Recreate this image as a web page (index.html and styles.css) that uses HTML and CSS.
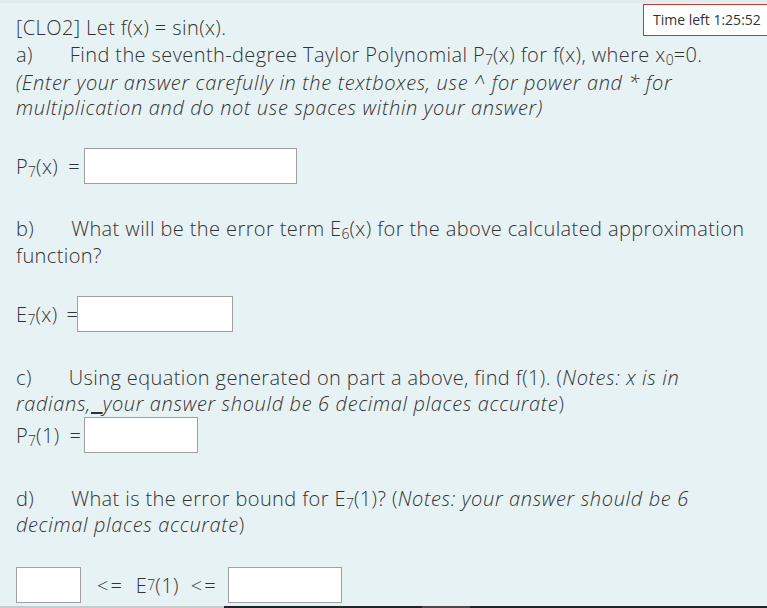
FILE: index.html
```html
<!DOCTYPE html>
<html>
<head>
<meta charset="utf-8">
<link rel="stylesheet" href="styles.css">
</head>
<body>
<div class="timer">Time left 1:25:52</div>
<main class="quiz">
  <p class="intro">[CLO2] Let f(x) = sin(x).<br><span class="lbl">a)</span>Find the seventh-degree Taylor Polynomial P<sub>7</sub>(x) for f(x), where x<sub>0</sub>=0.</p>
  <p class="note"><em>(Enter your answer carefully in the textboxes, use ^ for power and * for multiplication and do not use spaces within your answer)</em></p>
  <div class="row row-p7x"><span class="eq">P<sub>7</sub>(x)<span class="eqs">=</span></span><input class="box box-wide" type="text"></div>
  <p class="part part-b"><span class="lbl">b)</span>What will be the error term E<sub>6</sub>(x) for the above calculated approximation function?</p>
  <div class="row row-e7x"><span class="eq">E<sub>7</sub>(x)<span class="eqs">=</span></span><input class="box box-mid" type="text"></div>
  <p class="part part-c"><span class="lbl">c)</span>Using equation generated on part a above, find f(1). (<em>Notes: x is in radians,<u>&nbsp; </u>your answer should be 6 decimal places accurate</em>)</p>
  <div class="row row-p71"><span class="eq">P<sub>7</sub>(1)<span class="eqs">=</span></span><input class="box box-small" type="text"></div>
  <p class="part part-d"><span class="lbl">d)</span>What is the error bound for E<sub>7</sub>(1)? (<em>Notes: your answer should be 6 decimal places accurate</em>)</p>
  <div class="row row-bound"><input class="box box-tiny" type="text"><span class="cmp"><span class="op">&lt;=</span>E<sub>7</sub>(1)<span class="op op-r">&lt;=</span></span><input class="box box-small" type="text"></div>
</main>
<footer class="taskbar"><span class="tb-light"></span><span class="tb-dark"></span><span class="tb-grey"></span><span class="tb-rest"></span></footer>
</body>
</html>
```

FILE: styles.css
```css
html, body {
  margin: 0;
  padding: 0;
}
body {
  background: #e7f2f4;
  border-top: 3px solid #e0ebee;
  box-sizing: border-box;
  height: 608px;
  display: flex;
  flex-direction: column;
  font-family: "Open Sans", "Noto Sans", sans-serif;
  font-weight: 300;
  color: #333;
  font-size: 20px;
  letter-spacing: 0.4px;
  overflow: hidden;
}
.quiz {
  padding: 11px 0 0 16px;
  flex: 1;
}
p {
  margin: 0;
}
sub {
  font-size: 14px;
  line-height: 1;
  vertical-align: -3px;
  letter-spacing: 0;
}
em {
  font-style: italic;
  letter-spacing: 0.65px;
}
.lbl {
  margin-right: 37px;
}
.intro {
  line-height: 27px;
}
.note {
  margin-top: 2px;
  line-height: 25px;
  width: 700px;
}
.part {
  width: 745px;
}
.part-b {
  margin-top: 31px;
  line-height: 27px;
}
.part-c {
  margin-top: 33px;
  line-height: 26px;
  width: 700px;
}
.part-d {
  margin-top: 33px;
  line-height: 26px;
  width: 700px;
}
.row {
  display: flex;
  align-items: center;
}
.row-p7x {
  margin-top: 28px;
}
.row-e7x {
  margin-top: 27px;
}
.row-p71 {
  margin-top: 0;
}
.row-bound {
  margin-top: 29px;
}
.eq {
  white-space: nowrap;
}
.eqs {
  margin-left: 10px;
  letter-spacing: 0;
}
.row-p7x .eq { margin-right: 4px; }
.row-e7x .eq { margin-right: -1px; }
.row-e7x .eqs { margin-left: 9px; }
.row-p71 .eq { margin-right: 3px; }
.box {
  box-sizing: border-box;
  height: 36px;
  border: 1px solid #a0a0a0;
  background: #fff;
  margin: 0;
  padding: 0 4px;
  outline: none;
}
.box-wide { width: 213px; }
.box-mid { width: 156px; }
.box-small { width: 114px; }
.box-tiny { width: 65px; }
.cmp {
  display: flex;
  align-items: center;
  margin: 0 10px 0 16px;
  white-space: nowrap;
}
.op {
  letter-spacing: 2px;
  margin-right: 12px;
}
.op-r {
  margin: 0 0 0 12px;
}
.timer {
  position: absolute;
  top: 4px;
  left: 643px;
  width: 140px;
  height: 32px;
  box-sizing: border-box;
  border: 1px solid #c43a2e;
  background: #fff;
  font-family: "Open Sans", sans-serif;
  font-weight: 400;
  font-size: 14px;
  color: #333;
  padding-left: 9px;
  line-height: 30px;
  letter-spacing: 0;
}
.taskbar {
  display: flex;
  height: 2px;
}
.tb-light { width: 224px; background: #c9cccc; }
.tb-dark { width: 198px; background: #1f2426; }
.tb-grey { width: 48px; background: #4b4b4b; }
.tb-rest { flex: 1; background: #1f2426; }
```
